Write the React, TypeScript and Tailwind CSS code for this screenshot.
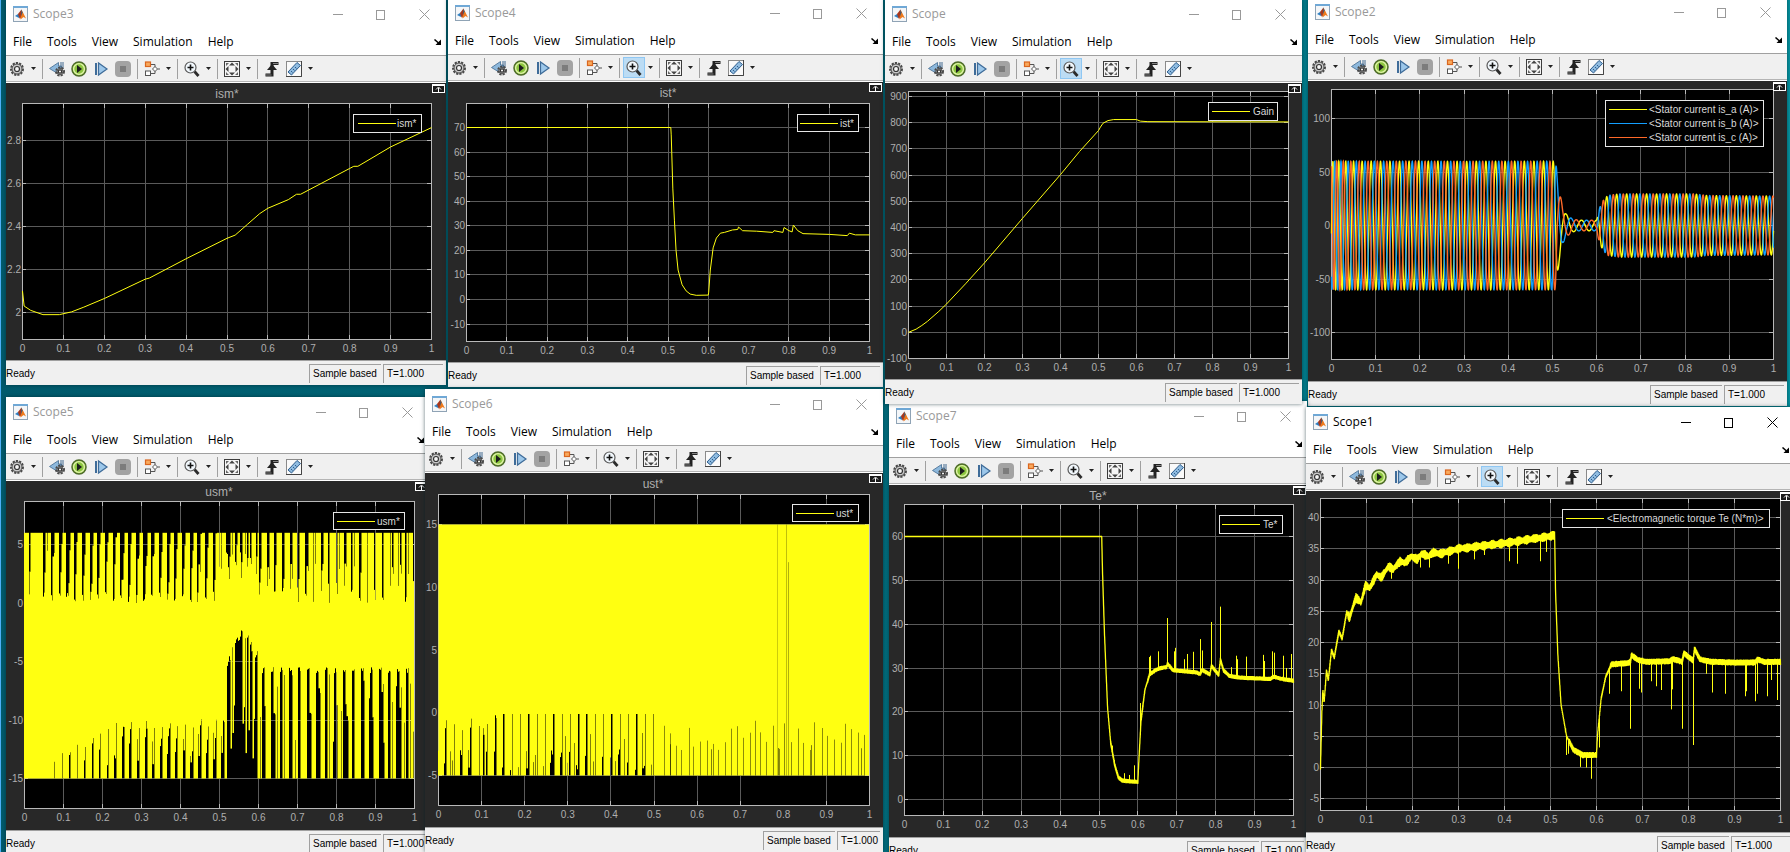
import type { ReactNode } from 'react';
import clsx from 'clsx';

type Point = [number, number];

interface Plot {
  width: number;
  height: number;
  /** Axes rectangle: left, top, right, bottom. */
  box: [number, number, number, number];
  yTicks: number[];
  /** Two known values and the y they are drawn at. */
  scale: [Point, Point];
  title?: string;
  titleX?: number;
  legend: { x: number; y: number; w: number; h: number; line: number; text: number; rows: [string, string][] };
  hiddenGrid?: number;
  draw: (x: (t: number) => number, y: (v: number) => number) => ReactNode;
}

interface ScopeProps {
  name: string;
  place: string;
  active?: boolean;
  zoomOn?: boolean;
  shortTime?: boolean;
  plot: Plot;
}

const YELLOW = '#ffff11';
const BLUE = '#139fff';
const RED = '#ff6929';

// Repeatable noise in 0..1.
const noise = (n: number) => {
  const s = Math.sin(n * 127.1 + 11.7) * 43758.5453;
  return s - Math.floor(s);
};

const snap = (n: number) => Math.floor(n) + 0.5;

const interpolate = (points: Point[], t: number) => {
  for (let i = 1; i < points.length; i++) {
    if (t <= points[i][0]) {
      const [t0, v0] = points[i - 1];
      const [t1, v1] = points[i];
      return v0 + ((v1 - v0) * (t - t0)) / (t1 - t0);
    }
  }
  return points[points.length - 1][1];
};

const polyline = (points: Point[], x: (t: number) => number, y: (v: number) => number) =>
  points.map(([t, v]) => `${x(t).toFixed(2)},${y(v).toFixed(2)}`).join(' ');

const trace = (points: Point[], stroke = YELLOW, width = 1) =>
  (x: (t: number) => number, y: (v: number) => number) => (
    <polyline points={polyline(points, x, y)} fill="none" stroke={stroke} strokeWidth={width} />
  );

// A thick noisy band that follows the points, with thin spikes from it.
const band = (points: Point[], half: (t: number) => number, spikes: Point[]) =>
  (x: (t: number) => number, y: (v: number) => number) => {
    const samples: Point[] = [];
    for (let i = 0; i <= 2400; i++) {
      const t = i / 2400;
      const sign = i % 2 ? 1 : -1;
      samples.push([t, interpolate(points, t) + sign * half(t) * (0.7 + 0.3 * noise(i))]);
    }
    return (
      <g fill="none" stroke={YELLOW}>
        <polyline points={polyline(samples, x, y)} strokeWidth="1.3" />
        <path d={spikes.map(([t, v]) => `M${snap(x(t))} ${y(interpolate(points, t))}V${y(v)}`).join('')} />
      </g>
    );
  };

const MAGNETIZING: Point[] = [
  [0, 2.1], [0.004, 2.03], [0.02, 2.01], [0.05, 1.99], [0.09, 1.99], [0.12, 2.003], [0.15, 2.025], [0.2, 2.065],
  [0.3, 2.155], [0.31, 2.16], [0.4, 2.25], [0.5, 2.345], [0.52, 2.36], [0.55, 2.41], [0.58, 2.46], [0.6, 2.485],
  [0.65, 2.525], [0.67, 2.55], [0.68, 2.55], [0.8, 2.67], [0.81, 2.68], [0.82, 2.68], [0.9, 2.77], [1, 2.86],
];

const TORQUE_CURRENT: Point[] = [
  [0, 70], [0.507, 70], [0.508, 67], [0.512, 45], [0.516, 32], [0.52, 20], [0.525, 12], [0.535, 6], [0.545, 3.5],
  [0.555, 2.2], [0.57, 1.7], [0.6, 1.8], [0.601, 3], [0.605, 12], [0.612, 21], [0.62, 25], [0.63, 27], [0.64, 27.3],
  [0.66, 28.3], [0.673, 28.5], [0.675, 29.5], [0.685, 28], [0.72, 27.8], [0.76, 27.3], [0.763, 28], [0.785, 27.3],
  [0.788, 29.3], [0.8, 28], [0.808, 27.5], [0.811, 30.3], [0.822, 28], [0.835, 26.8], [0.9, 26.5], [0.945, 26],
  [0.95, 27], [0.965, 26.3], [1, 26.3],
];

const SPEED: Point[] = [
  [0, 0], [0.02, 12], [0.035, 26], [0.05, 42], [0.08, 80], [0.1, 108], [0.15, 185], [0.2, 265], [0.3, 435],
  [0.4, 602], [0.45, 690], [0.5, 770], [0.505, 783], [0.512, 798], [0.525, 808], [0.54, 812], [0.6, 812],
  [0.61, 806], [0.63, 804], [1, 803],
];

const TORQUE_REF: Point[] = [
  [0, 60], [0.507, 60], [0.509, 52], [0.514, 38], [0.522, 21], [0.53, 13], [0.54, 8], [0.55, 5], [0.56, 4.3],
  [0.6, 4], [0.602, 8], [0.608, 18], [0.618, 25], [0.63, 28.5], [0.645, 29.5], [0.66, 30], [0.674, 30.2],
  [0.676, 31], [0.69, 29.5], [0.75, 29], [0.76, 28.6], [0.765, 29.6], [0.785, 28.5], [0.789, 30.5], [0.808, 28.4],
  [0.812, 32], [0.82, 29.5], [0.835, 28.2], [0.86, 27.8], [0.94, 27.5], [0.95, 28], [0.97, 27.5], [1, 27.1],
];

const TORQUE_REF_SPIKES: Point[] = [
  [0.535, 12.3], [0.54, 9], [0.566, 6], [0.579, 5.6], [0.59, 7.8], [0.606, 22], [0.629, 32.5], [0.632, 32.8],
  [0.653, 33.8], [0.676, 41.4], [0.693, 33.8], [0.697, 34.6], [0.719, 32], [0.728, 33.2], [0.742, 33.7],
  [0.762, 36.6], [0.767, 34], [0.788, 40.5], [0.812, 44], [0.84, 30.2], [0.854, 32.8], [0.857, 32], [0.88, 32.6],
  [0.922, 33], [0.925, 31.6], [0.947, 33.8], [0.951, 33.5], [0.974, 32.8], [0.981, 30], [0.996, 33.2],
];

const TORQUE: Point[] = [
  [0, 0], [0.003, 9], [0.005, 12.3], [0.008, 10.5], [0.013, 15.5], [0.017, 14], [0.024, 18.8], [0.03, 17.6],
  [0.04, 21.8], [0.047, 20.6], [0.057, 24.9], [0.063, 23.9], [0.077, 27.2], [0.088, 26.4], [0.098, 29.2],
  [0.107, 28.7], [0.122, 30.9], [0.132, 30.4], [0.148, 32.2], [0.158, 31.7], [0.173, 33], [0.183, 32.7],
  [0.197, 33.8], [0.21, 33.3], [0.22, 34.2], [0.235, 33.8], [0.245, 34.4], [0.26, 34.2], [0.3, 35], [0.4, 35.9],
  [0.5, 37], [0.509, 37.2], [0.511, 28], [0.516, 18], [0.523, 10], [0.535, 5], [0.55, 2.8], [0.57, 2], [0.6, 2],
  [0.602, 5], [0.61, 11], [0.62, 14.5], [0.632, 16.5], [0.67, 16.7], [0.674, 17], [0.676, 18], [0.69, 17.2],
  [0.71, 16.9], [0.76, 17], [0.765, 17.4], [0.786, 16.9], [0.79, 18.3], [0.81, 17.1], [0.813, 19], [0.825, 17.3],
  [0.85, 16.9], [0.9, 16.8], [0.945, 16.8], [0.95, 17.3], [0.965, 16.9], [1, 16.9],
];

const TORQUE_SPIKES: Point[] = [
  [0.155, 30.2], [0.218, 32], [0.237, 32], [0.278, 32.6], [0.299, 31.8], [0.334, 33.3], [0.357, 34], [0.41, 33],
  [0.428, 32.6], [0.478, 33], [0.492, 34.5], [0.535, 2], [0.54, 2.2], [0.566, 0.1], [0.578, 0], [0.59, -1.8],
  [0.606, 3.2], [0.628, 11.8], [0.654, 12.2], [0.674, 6.2], [0.694, 12.6], [0.697, 12], [0.719, 13.8], [0.73, 13],
  [0.742, 12.4], [0.762, 9.3], [0.765, 12.5], [0.788, 6.2], [0.811, 3.6], [0.84, 15], [0.853, 12], [0.88, 11.8],
  [0.923, 11.4], [0.926, 12.2], [0.946, 10.6], [0.95, 11.8], [0.972, 11.4], [0.98, 14], [0.994, 10.8],
];

const AMPLITUDE: Point[] = [
  [0, 60], [0.507, 60], [0.515, 34], [0.523, 17], [0.53, 11], [0.545, 6], [0.56, 5], [0.6, 5], [0.606, 16],
  [0.614, 23], [0.625, 28], [0.65, 29.5], [0.82, 29.5], [0.85, 28], [1, 27.5],
];

const statorPhase = (t: number) => {
  if (t > 0.6) return 44.3 * (t - 0.6);
  if (t > 0.51) return 29 * (t - 0.6);
  return -2.61 + 46 * (t - 0.51) - 1.2 * Math.exp(-t / 0.03);
};

const statorCurrent = (shift: number) => {
  const points: Point[] = [];
  for (let i = 0; i <= 4000; i++) {
    const t = i / 4000;
    points.push([t, interpolate(AMPLITUDE, t) * Math.cos(2 * Math.PI * (statorPhase(t) - shift))]);
  }
  return points;
};

// Switched voltages fill whole pixel columns, each from a top to a bottom value.
type Column = (i: number, t: number) => [number, number];

const columns = (count: number, column: Column) => (x: (t: number) => number, y: (v: number) => number) => {
  let solid = '';
  let faint = '';
  for (let i = 0; i < count; i++) {
    const px = snap(x(0)) + i;
    const [top, bottom] = column(i, i / count);
    const [nextTop, nextBottom] = column(i + 1, (i + 1) / count);
    solid += `M${px} ${y(top).toFixed(1)}V${y(bottom).toFixed(1)}`;
    if (nextTop > top + 0.5) faint += `M${px} ${y(nextTop).toFixed(1)}V${y(top).toFixed(1)}`;
    if (nextBottom < bottom - 0.5) faint += `M${px} ${y(bottom).toFixed(1)}V${y(nextBottom).toFixed(1)}`;
  }
  return (
    <g fill="none" stroke={YELLOW}>
      <path d={solid} />
      <path d={faint} opacity="0.5" />
    </g>
  );
};

const usmColumn: Column = (i, t) => {
  const p = (i / 7.7) % 1;
  const r = noise(i);
  let top = 6;
  if (t < 0.5) {
    if (p > 0.45) top = p < 0.72 ? 1 - r : p < 0.86 ? 1.5 + 2.5 * r : 4 + 2 * r;
    if (t < 0.06 && r > 0.5) top = 6;
  } else if (t < 0.6) {
    top = r > 0.6 ? 6 : 2 + 3 * noise(i + 40);
  } else if (p > 0.45) {
    top = p < 0.65 ? 2 * r : r > 0.5 ? 6 : 2 + 3 * r;
  }

  let bottom = -15;
  if (t > 0.065 && t < 0.52) {
    const floor = interpolate([[0.06, -14], [0.15, -12.5], [0.2, -11.6], [0.26, -10.7], [0.52, -11]], t);
    const gap = interpolate([[0.06, 0.85], [0.2, 0.7], [0.35, 0.55], [0.52, 0.5]], t);
    if (p > gap) bottom = p > 0.82 ? floor + r : floor - 3 * r;
  } else if (t >= 0.52 && t < 0.6) {
    const roof = interpolate([[0.52, -5], [0.55, -2], [0.57, -2.5], [0.6, -4]], t);
    bottom = r > 0.78 ? -8 - 6 * noise(i + 7) : roof - 1.5 * r;
  } else if (t >= 0.6) {
    const q = (i / 9) % 1;
    if (q > 0.35 && q < 0.75) bottom = -5.5 - 0.5 * r;
    else if (q >= 0.75) bottom = r > 0.55 ? -15 : -6 - 7 * r;
    else if (r > 0.85) bottom = -7 - 6 * noise(i + 90);
  }
  return [top, bottom];
};

const ustColumn: Column = (i, t) => {
  const p = (i / 8.3) % 1;
  const r = noise(i + 300);
  if (i < 2) return [i ? 15 : -3, -5];
  if (t < 0.51) {
    if (p > 0.83) return [15, -0.1 - (t < 0.15 ? 1.5 * r : 0)];
    if (p > 0.6) return [15, r > 0.35 ? -2 - 2.6 * r : -5];
    if (p > 0.3 && r > 0.85) return [15, -1 - 3 * noise(i)];
  } else if (p > 0.88) {
    return [15, r > 0.75 ? -1 - 2 * r : -5];
  }
  return [15, -5];
};

const drawUst: Plot['draw'] = (x, y) => {
  // Thin dark slits left where the fill is not quite solid.
  let slits = '';
  for (let i = 0; i < 34; i++) {
    const t = 0.52 + i * 0.0141 + 0.006 * noise(i);
    slits += `M${snap(x(t))} ${y(-0.4 - 2.6 * noise(i + 5))}V${y(-5)}`;
  }
  return (
    <>
      {columns(431, ustColumn)(x, y)}
      <g stroke="#000" fill="none">
        <path d={slits} opacity="0.45" />
        <path d={`M${snap(x(0.787))} ${y(15)}V${y(-5)}`} opacity="0.2" />
        <path d={`M${snap(x(0.808))} ${y(15)}V${y(-5)}`} opacity="0.25" />
        <path d={`M${snap(x(0.811))} ${y(12)}V${y(-5)}`} opacity="0.3" />
      </g>
    </>
  );
};

const SCOPES: ScopeProps[] = [
  {
    name: 'Scope3',
    place: 'left-[6px] -top-px w-[440px] z-10',
    plot: {
      width: 440, height: 277, box: [16, 20, 425, 256], yTicks: [2, 2.2, 2.4, 2.6, 2.8],
      scale: [[2, 229], [2.8, 57]], title: 'ism*', titleX: 221,
      legend: { x: 347, y: 31, w: 68, h: 18, line: 352, text: 391, rows: [['ism*', YELLOW]] },
      draw: trace(MAGNETIZING),
    },
  },
  {
    name: 'Scope4',
    place: 'left-[448px] -top-[2px] w-[435px] z-10',
    zoomOn: true,
    plot: {
      width: 435, height: 280, box: [18, 21, 421, 259], yTicks: [-10, 0, 10, 20, 30, 40, 50, 60, 70],
      scale: [[0, 217], [70, 45]], title: 'ist*', titleX: 220, hiddenGrid: 7,
      legend: { x: 349, y: 32, w: 61, h: 17, line: 352, text: 392, rows: [['ist*', YELLOW]] },
      draw: trace(TORQUE_CURRENT),
    },
  },
  {
    name: 'Scope',
    place: 'left-[885px] -top-px w-[417px] z-30',
    zoomOn: true,
    plot: {
      width: 417, height: 296, box: [23, 8, 403, 275], yTicks: [-100, 0, 100, 200, 300, 400, 500, 600, 700, 800, 900],
      scale: [[-100, 275], [900, 13]],
      legend: { x: 323, y: 19, w: 69, h: 18, line: 327, text: 368, rows: [['Gain', YELLOW]] },
      draw: trace(SPEED),
    },
  },
  {
    name: 'Scope2',
    place: 'left-[1308px] -top-[3px] w-[479px] z-10',
    plot: {
      width: 479, height: 300, box: [23, 8, 465, 278], yTicks: [-100, -50, 0, 50, 100],
      scale: [[-100, 251], [100, 37]],
      legend: {
        x: 297, y: 19, w: 158, h: 46, line: 301, text: 341,
        rows: [
          ['<Stator current is_a (A)>', YELLOW],
          ['<Stator current is_b (A)>', BLUE],
          ['<Stator current is_c (A)>', RED],
        ],
      },
      draw: (x, y) => (
        <>
          {trace(statorCurrent(0), YELLOW, 1.4)(x, y)}
          {trace(statorCurrent(1 / 3), BLUE, 1.4)(x, y)}
          {trace(statorCurrent(2 / 3), RED, 1.4)(x, y)}
        </>
      ),
    },
  },
  {
    name: 'Scope5',
    place: 'left-[6px] top-[397px] w-[423px] z-10',
    shortTime: true,
    plot: {
      width: 423, height: 349, box: [18, 20, 408, 327], yTicks: [-15, -10, -5, 0, 5],
      scale: [[-15, 297], [5, 63]], title: 'usm*', titleX: 213,
      legend: { x: 327, y: 31, w: 71, h: 17, line: 331, text: 371, rows: [['usm*', YELLOW]] },
      draw: columns(390, usmColumn),
    },
  },
  {
    name: 'Scope6',
    place: 'left-[425px] top-[389px] w-[458px] z-20',
    shortTime: true,
    plot: {
      width: 458, height: 354, box: [13, 21, 444, 332], yTicks: [-5, 0, 5, 10, 15],
      scale: [[-5, 302], [15, 51]], title: 'ust*', titleX: 228, hiddenGrid: 8,
      legend: { x: 367, y: 31, w: 66, h: 17, line: 371, text: 411, rows: [['ust*', YELLOW]] },
      draw: drawUst,
    },
  },
  {
    name: 'Scope7',
    place: 'left-[889px] top-[401px] w-[418px] z-20',
    shortTime: true,
    plot: {
      width: 418, height: 352, box: [15, 19, 404, 330], yTicks: [0, 10, 20, 30, 40, 50, 60],
      scale: [[0, 314], [60, 51]], title: 'Te*', titleX: 209,
      legend: { x: 330, y: 30, w: 63, h: 18, line: 333, text: 374, rows: [['Te*', YELLOW]] },
      draw: band(TORQUE_REF, t => (t < 0.507 ? 0 : t < 0.53 || (t > 0.6 && t < 0.625) ? 0.2 : 0.5), TORQUE_REF_SPIKES),
    },
  },
  {
    name: 'Scope1',
    place: 'left-[1306px] top-[407px] w-[488px] z-40',
    active: true,
    zoomOn: true,
    plot: {
      width: 488, height: 341, box: [14, 7, 474, 319], yTicks: [-5, 0, 5, 10, 15, 20, 25, 30, 35, 40],
      scale: [[0, 276], [40, 26]],
      legend: { x: 256, y: 18, w: 207, h: 18, line: 260, text: 301, rows: [['<Electromagnetic torque Te (N*m)>', YELLOW]] },
      draw: band(
        TORQUE,
        t => (t < 0.06 ? 0.35 : t > 0.509 && t < 0.54 ? 0.15 : t > 0.6 && t < 0.63 ? 0.25 : t < 0.509 ? 0.65 + 0.15 * Math.sin(t * 340) : 0.5),
        TORQUE_SPIKES
      ),
    },
  },
];

const LogoIcon = () => (
  <svg width="15" height="16" viewBox="0 0 15 16" aria-hidden="true">
    <rect x="0.5" y="0.5" width="14" height="15" fill="#f4f6f8" stroke="#8fa3b5" />
    <rect x="0" y="0" width="15" height="2" fill="#6fa8d6" />
    <path d="M2 10l3-2 3 2-2 2z" fill="#2f7fc1" />
    <path d="M5 8l3.500-4.500 1 5.500-2.500 4-1-2z" fill="#a8371b" />
    <path d="M8.500 3.500L13 12.500l-2.500-1.500-3 2.500z" fill="#ee7a1c" />
    <path d="M8.500 3.500l1 3-1.500 4z" fill="#1f4f86" />
  </svg>
);

const GearShape = ({ cx, cy, r }: { cx: number; cy: number; r: number }) => (
  <>
    <circle cx={cx} cy={cy} r={r} fill="none" stroke="#4a4a4a" strokeWidth="2" strokeDasharray="2.200 1.100" />
    <circle cx={cx} cy={cy} r={r - 1} fill="#c9c9c9" stroke="#4a4a4a" />
    <circle cx={cx} cy={cy} r={r / 2.4} fill="#f5f5f5" stroke="#333" strokeWidth="1.200" />
  </>
);

const icons = {
  gear: <GearShape cx={8} cy={8} r={6} />,
  config: (
    <>
      <path d="M0.500 7.500l9-6v3.500h3v4.500h-3V13z" fill="#8db8dc" stroke="#41698f" strokeWidth="0.800" />
      <path d="M12 1v7M14 1v6" stroke="#41698f" />
      <GearShape cx={11} cy={10.5} r={4} />
    </>
  ),
  play: (
    <>
      <circle cx="8" cy="8" r="7" fill="#8cc63f" stroke="#4e6b2a" strokeWidth="1.500" />
      <circle cx="8" cy="8" r="5.400" fill="none" stroke="#dff2a8" strokeWidth="1.400" />
      <path d="M6 4v8L11 8z" fill="#1d1d1d" />
    </>
  ),
  step: (
    <>
      <path d="M3 2v12" stroke="#3f6c99" strokeWidth="2" />
      <path d="M5.500 2v12L14 8z" fill="#9cc7ea" stroke="#3f6c99" strokeWidth="1.200" />
    </>
  ),
  stop: (
    <>
      <rect width="16" height="16" rx="4" fill="#a3a3a3" />
      <rect x="5" y="5" width="6" height="6" fill="#7c7c7c" />
    </>
  ),
  route: (
    <>
      <path d="M6 3.500h5v3M4 12.500h7V9" stroke="#555" fill="none" />
      <rect x="1.500" y="1" width="5" height="4.500" fill="#f9a95c" stroke="#d9661f" strokeWidth="1.200" />
      <rect x="1.500" y="10" width="5" height="4.500" fill="#fff" stroke="#555" />
      <path d="M11 5.500l2.500 2.500-2.500 2.500L8.500 8z" fill="#fff" stroke="#555" />
      <path d="M13.500 8H16" stroke="#555" />
    </>
  ),
  zoom: (
    <>
      <path d="M10.500 10.500l4 4.500" stroke="#2b2b2b" strokeWidth="2.800" />
      <circle cx="6.500" cy="6.500" r="5.500" fill="#f2f8fd" stroke="#5a5a5a" strokeWidth="1.200" />
      <path d="M3.500 6.500h6M6.500 3.500v6" stroke="#111" strokeWidth="1.600" />
    </>
  ),
  fit: (
    <>
      <rect x="0.500" y="0.500" width="15" height="15" fill="#f5f5f5" stroke="#3c3c3c" />
      <path d="M8 1.500l3 3H5zM8 14.500l3-3H5zM1.500 8l3-3v6zM14.500 8l-3-3v6z" fill="#444" />
      <path d="M2 2h3L2 5zM14 2h-3l3 3zM2 14h3l-3-3zM14 14h-3l3-3z" fill="#666" />
    </>
  ),
  trigger: (
    <>
      <path d="M1.500 14h6.500V2.500h6.500" stroke="#222" strokeWidth="3" fill="none" />
      <path d="M8 3l5 6H3z" fill="#222" />
      <path d="M2 14h5.500M9 2.500h5" stroke="#999" strokeWidth="0.800" />
    </>
  ),
  ruler: (
    <>
      <rect x="0.500" y="0.500" width="15" height="15" fill="#fafafa" stroke="#8a8a8a" />
      <path d="M15.500 0v15.500H0" stroke="#444" fill="none" />
      <path d="M2 11l9-9.500 3.500 3-9 9.500z" fill="#8fbbe0" stroke="#2f5f8f" />
      <path d="M5 10l1.500 1.500M7 8l1.500 1.500M9 6l1.500 1.500" stroke="#2f5f8f" />
    </>
  ),
};

function ToolButton({ icon, label, on }: { icon: keyof typeof icons; label: string; on?: boolean }) {
  return (
    <button
      type="button"
      aria-label={label}
      className={clsx('flex h-[21px] w-[22px] items-center justify-center border', on ? 'border-[#8fc7f3] bg-[#bcdcf4]' : 'border-transparent')}
    >
      <svg width="16" height="16" viewBox="0 0 16 16" className="shrink-0" aria-hidden="true">
        {icons[icon]}
      </svg>
    </button>
  );
}

const DropArrow = ({ label }: { label: string }) => (
  <button type="button" aria-label={label} className="flex h-[21px] w-[11px] items-center justify-center">
    <svg width="5" height="3" viewBox="0 0 5 3" aria-hidden="true">
      <path d="M0 0h5L2.500 3z" fill="#222" />
    </svg>
  </button>
);

const Divider = () => <div className="mx-[3px] h-5 w-px bg-[#a0a0a0]" />;

function ScopePlot({ plot, name }: { plot: Plot; name: string }) {
  const [left, top, right, bottom] = plot.box;
  const [[v0, y0], [v1, y1]] = plot.scale;
  const x = (t: number) => left + 0.5 + t * (right - left);
  const y = (v: number) => y0 + 0.5 + ((v - v0) * (y1 - y0)) / (v1 - v0);
  const { legend } = plot;
  const inner = Array.from({ length: 9 }, (_, i) => i + 1).filter(i => i !== plot.hiddenGrid);

  return (
    <svg width={plot.width} height={plot.height} className="block shrink-0 text-[10px]" role="img" aria-label={`${name} plot`}>
      <rect x={left} y={top} width={right - left + 1} height={bottom - top + 1} fill="#000" />
      <g stroke="#5a5a5a">
        {inner.map(i => (
          <path key={i} d={`M${snap(x(i / 10))} ${top}V${bottom}`} />
        ))}
        {plot.yTicks.map(v => (
          <path key={v} d={`M${left} ${snap(y(v))}H${right}`} />
        ))}
      </g>
      <g stroke="#b8b8b8" fill="none">
        <rect x={left + 0.5} y={top + 0.5} width={right - left} height={bottom - top} />
        {inner.map(i => (
          <path key={i} d={`M${snap(x(i / 10))} ${top}v5M${snap(x(i / 10))} ${bottom}v-4`} />
        ))}
        {plot.yTicks.map(v => (
          <path key={v} d={`M${left} ${snap(y(v))}h4M${right} ${snap(y(v))}h-4`} />
        ))}
      </g>
      {plot.draw(x, y)}
      <g fill="#afafaf">
        {Array.from({ length: 11 }, (_, i) => (
          <text key={i} x={x(i / 10)} y={bottom + 13} textAnchor="middle">
            {i / 10}
          </text>
        ))}
        {plot.yTicks.map(v => (
          <text key={v} x={left - 1} y={Math.floor(y(v)) + 4} textAnchor="end">
            {v}
          </text>
        ))}
        {plot.title && (
          <text x={plot.titleX} y={15} textAnchor="middle" className="text-[12px]">
            {plot.title}
          </text>
        )}
      </g>
      <rect x={legend.x + 0.5} y={legend.y + 0.5} width={legend.w} height={legend.h} fill="#000" stroke="#e6e6e6" />
      {legend.rows.map(([text, color], i) => (
        <g key={text}>
          <path d={`M${legend.line} ${legend.y + 9.5 + i * 14}h38`} stroke={color} />
          <text x={legend.text} y={legend.y + 13 + i * 14} fill="#d8d8d8">
            {text}
          </text>
        </g>
      ))}
      <g transform={`translate(${plot.width - 14} 1)`} fill="none" stroke="#fff">
        <rect x="0.5" y="0.5" width="12" height="8" fill="#1a1a1a" />
        <path d="M1 1.500h11M6.500 8V4M4 5.500L6.500 3 9 5.500" />
      </g>
    </svg>
  );
}

function ScopeWindow({ name, place, active, zoomOn, shortTime, plot }: ScopeProps) {
  return (
    <section
      aria-label={name}
      className={clsx('absolute flex flex-col overflow-hidden bg-white shadow-[0_0_4px_rgba(0,30,40,0.6)]', place)}
    >
      <header className={clsx('flex h-[30px] items-center pl-[7px]', active ? 'text-black' : 'text-[#999]')}>
        <LogoIcon />
        <h2 className="ml-[5px] flex-1 text-[12px]">{name}</h2>
        <button type="button" aria-label="Minimize" className="flex h-full w-[43px] items-center justify-center">
          <svg width="11" height="11" aria-hidden="true"><path d="M0 5.500h10" stroke="currentColor" /></svg>
        </button>
        <button type="button" aria-label="Maximize" className="flex h-full w-[43px] items-center justify-center">
          <svg width="11" height="11" aria-hidden="true"><rect x="0.500" y="1.500" width="8" height="9" fill="none" stroke="currentColor" /></svg>
        </button>
        <button type="button" aria-label="Close" className="flex h-full w-[43px] items-center justify-center">
          <svg width="11" height="11" aria-hidden="true"><path d="M0.500 0.500l10 10M10.500 0.500l-10 10" stroke="currentColor" /></svg>
        </button>
      </header>

      <nav className="flex h-[26px] items-center gap-[15px] pl-[7px] text-[12px] text-black">
        <button type="button">File</button>
        <button type="button">Tools</button>
        <button type="button">View</button>
        <button type="button">Simulation</button>
        <button type="button">Help</button>
        <button type="button" aria-label="Undock" className="mr-[5px] ml-auto">
          <svg width="7" height="6" viewBox="0 0 7 6" aria-hidden="true">
            <path d="M0.500 0.500l4 3.500" stroke="#000" strokeWidth="1.500" />
            <path d="M7 0.500V6H1.500z" fill="#000" />
          </svg>
        </button>
      </nav>

      <div role="toolbar" className="flex h-[27px] items-center border-t border-b border-[#a0a0a0] border-b-[#b4b4b4] bg-[#f0f0f0]">
        <ToolButton icon="gear" label="Configuration properties" />
        <DropArrow label="Configuration menu" />
        <Divider />
        <ToolButton icon="config" label="Step back options" />
        <ToolButton icon="play" label="Run" />
        <ToolButton icon="step" label="Step forward" />
        <ToolButton icon="stop" label="Stop" />
        <Divider />
        <ToolButton icon="route" label="Highlight block" />
        <DropArrow label="Highlight menu" />
        <Divider />
        <ToolButton icon="zoom" label="Zoom" on={zoomOn} />
        <DropArrow label="Zoom menu" />
        <Divider />
        <ToolButton icon="fit" label="Scale axes limits" />
        <DropArrow label="Scale menu" />
        <Divider />
        <ToolButton icon="trigger" label="Triggers" />
        <ToolButton icon="ruler" label="Cursor measurements" />
        <DropArrow label="Measurements menu" />
      </div>

      <div className="border-t border-white bg-[#282828]">
        <ScopePlot plot={plot} name={name} />
      </div>

      <footer className="flex h-[25px] items-center gap-[2px] border-t border-[#a0a0a0] bg-[#f0f0f0] pr-[3px] text-[10px] text-black">
        <span className="flex-1">Ready</span>
        <span className="h-[19px] w-[72px] border-t border-l border-[#a0a0a0] pl-[3px] leading-[18px] whitespace-nowrap">Sample based</span>
        <span className={clsx('h-[19px] border-t border-l border-[#a0a0a0] pl-[3px] leading-[18px]', shortTime ? 'w-[43px]' : 'w-[60px]')}>
          T=1.000
        </span>
      </footer>
    </section>
  );
}

export default function App() {
  return (
    <main className="relative h-screen min-h-[600px] w-full overflow-hidden bg-linear-to-r from-[#005a6c] via-[#007080] to-[#0594a2] font-['Liberation_Sans',Arial,sans-serif] shadow-[inset_1px_0_0_#4fb0f8] [&_h2]:font-['Open_Sans',sans-serif] [&_nav]:font-['Open_Sans',sans-serif]">
      {SCOPES.map(scope => (
        <ScopeWindow key={scope.name} {...scope} />
      ))}
    </main>
  );
}
